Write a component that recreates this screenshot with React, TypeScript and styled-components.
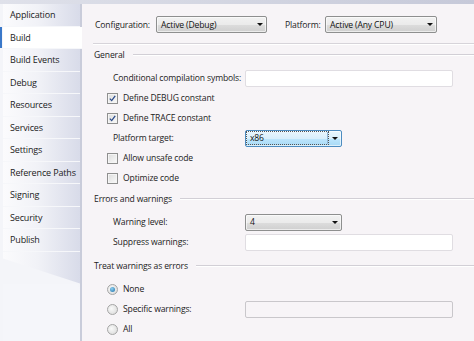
import React from 'react';
import styled, { createGlobalStyle } from 'styled-components';

const GlobalStyle = createGlobalStyle`
  html, body {
    margin: 0;
    padding: 0;
    background: #f7f4f7;
  }
  body {
    font-family: "Open Sans", "Liberation Sans", sans-serif;
    font-size: 8.6px;
    letter-spacing: -0.15px;
    color: #1b1b1b;
    white-space: nowrap;
  }
`;

const Window = styled.div`
  width: 474px;
  height: 341px;
  display: flex;
  flex-direction: column;
  overflow: hidden;
`;

const TopStrip = styled.div`
  height: 4px;
  flex: none;
  background: linear-gradient(to right, #dfe1ea, #c6c9d9);
`;

const Body = styled.div`
  flex: 1;
  display: flex;
  min-height: 0;
`;

const Sidebar = styled.div`
  width: 80px;
  flex: none;
  display: flex;
  flex-direction: column;
  background: #f4f5f9;
  border-right: 2px solid #c9ccda;
`;

const Tab = styled.div<{ $active?: boolean }>`
  height: 22.5px;
  flex: none;
  margin-left: 3px;
  padding-left: 7px;
  display: flex;
  align-items: center;
  box-sizing: border-box;
  border-bottom: 1px solid #f6f7fa;
  font-size: 9px;
  background: ${(p) =>
    p.$active ? '#ffffff' : 'linear-gradient(to right, #fbfbfd, #f1f2f7 45%, #d8dbe9)'};
  margin-right: ${(p) => (p.$active ? '-2px' : '0')};
  position: relative;
  z-index: ${(p) => (p.$active ? 1 : 0)};

  &::before {
    content: '';
    display: ${(p) => (p.$active ? 'block' : 'none')};
    position: absolute;
    left: -3px;
    top: 0;
    bottom: 0;
    width: 2px;
    background: #3a78c9;
  }
`;

const TabFoot = styled.div`
  height: 32px;
  flex: none;
  margin-left: 3px;
  background: linear-gradient(to right, #fbfbfd, #f1f2f7 45%, #d8dbe9);
  clip-path: polygon(0 0, 100% 0, 100% 100%, 0 22%);
`;

const SidebarRest = styled.div`
  flex: 1;
  margin-left: 3px;
  background: #f5f6fa;
  border-top-right-radius: 5px;
`;

const Content = styled.div`
  flex: 1;
  background: #f7f4f7;
  padding: 12px 0 0 12px;
  display: flex;
  flex-direction: column;
`;

const ConfigRow = styled.div`
  display: flex;
  align-items: center;
  height: 17px;
`;

const ConfigLabel = styled.span<{ $w: number; $gap?: number }>`
  width: ${(p) => p.$w}px;
  margin-left: ${(p) => p.$gap ?? 0}px;
  padding-left: 1px;
  flex: none;
`;

const Separator = styled.div`
  margin-top: 10px;
  margin-left: -1px;
  border-top: 1px solid #d7d4da;
  border-bottom: 1px solid #ffffff;
`;

const GroupHeader = styled.div<{ $top: number }>`
  display: flex;
  align-items: center;
  height: 12px;
  margin-top: ${(p) => p.$top}px;
  margin-bottom: 7px;

  &::after {
    content: '';
    flex: 1;
    margin-left: 8px;
    border-top: 1px solid #d2cfd6;
    border-bottom: 1px solid #ffffff;
  }
`;

const Row = styled.div`
  display: flex;
  align-items: center;
  height: 20px;
  padding-left: 19px;
`;

const CheckRow = styled.label`
  display: flex;
  align-items: center;
  height: 20px;
  padding-left: 13px;
  gap: 5px;
`;

const Label = styled.span<{ $w?: number }>`
  width: ${(p) => p.$w ?? 132}px;
  flex: none;
`;

const Select = styled.div<{ $w: number; $focus?: boolean }>`
  width: ${(p) => p.$w}px;
  height: 17px;
  box-sizing: border-box;
  display: flex;
  align-items: center;
  border: 1px solid ${(p) => (p.$focus ? '#4d8cc0' : '#8e8f8f')};
  border-radius: 2px;
  background: ${(p) =>
    p.$focus
      ? 'linear-gradient(#eaf6fd, #d9effc 50%, #bee6fd 51%, #a7d9f5)'
      : 'linear-gradient(#f2f2f2, #ebebeb 50%, #dddddd 51%, #cfcfcf)'};
  box-shadow: inset 0 0 0 1px rgba(255, 255, 255, 0.6);
  color: #111;
`;

const SelectText = styled.span<{ $focus?: boolean }>`
  flex: 1;
  padding-left: 3px;
  margin: 1px 0 1px 1px;
  line-height: 12px;
  outline: ${(p) => (p.$focus ? '1px dotted #555' : 'none')};
  border-right: ${(p) => (p.$focus ? '1px solid #8fb7d8' : 'none')};
`;

const Arrow = styled.span`
  width: 13px;
  display: flex;
  justify-content: center;

  &::after {
    content: '';
    border-left: 3px solid transparent;
    border-right: 3px solid transparent;
    border-top: 3px solid #111;
  }
`;

const TextInput = styled.div<{ $disabled?: boolean }>`
  width: 208px;
  height: 17px;
  box-sizing: border-box;
  border: 1px solid ${(p) => (p.$disabled ? '#c9c7cb' : '#e0dde2')};
  border-radius: 2px;
  background: ${(p) => (p.$disabled ? '#f7f4f7' : '#ffffff')};
`;

const Box = styled.span`
  width: 11px;
  height: 11px;
  box-sizing: border-box;
  border: 1px solid #8f8f8f;
  background: linear-gradient(135deg, #dcdcdc, #fafafa);
  box-shadow: inset 0 0 0 1px #f4f4f4;
  display: flex;
  align-items: center;
  justify-content: center;
  flex: none;
`;

const Radio = styled.span<{ $checked?: boolean }>`
  width: 11px;
  height: 11px;
  box-sizing: border-box;
  border-radius: 50%;
  border: 1px solid #a5a5a5;
  background: radial-gradient(circle at 40% 40%, #fafafa, #d6d6d6);
  display: flex;
  align-items: center;
  justify-content: center;
  flex: none;

  &::after {
    content: '';
    display: ${(p) => (p.$checked ? 'block' : 'none')};
    width: 5px;
    height: 5px;
    border-radius: 50%;
    background: radial-gradient(circle at 40% 35%, #8fd0f2, #1c6ea6);
  }
`;

const Check = () => (
  <svg width="7" height="7" viewBox="0 0 7 7">
    <path d="M0.8 3.6 L2.7 5.6 L6.2 0.8" fill="none" stroke="#2b4a8a" strokeWidth="1.3" />
  </svg>
);

const tabs = [
  'Application',
  'Build',
  'Build Events',
  'Debug',
  'Resources',
  'Services',
  'Settings',
  'Reference Paths',
  'Signing',
  'Security',
  'Publish',
];

const App: React.FC = () => {
  return (
    <>
      <GlobalStyle />
      <Window>
        <TopStrip />
        <Body>
          <Sidebar>
            {tabs.map((t) => (
              <Tab key={t} $active={t === 'Build'}>
                {t}
              </Tab>
            ))}
            <TabFoot />
            <SidebarRest />
          </Sidebar>

          <Content>
            <ConfigRow>
              <ConfigLabel $w={61}>Configuration:</ConfigLabel>
              <Select $w={111}>
                <SelectText>Active (Debug)</SelectText>
                <Arrow />
              </Select>
              <ConfigLabel $w={40} $gap={17}>
                Platform:
              </ConfigLabel>
              <Select $w={112}>
                <SelectText>Active (Any CPU)</SelectText>
                <Arrow />
              </Select>
            </ConfigRow>
            <Separator />

            <GroupHeader $top={4}>General</GroupHeader>
            <Row>
              <Label>Conditional compilation symbols:</Label>
              <TextInput />
            </Row>
            <CheckRow>
              <Box>
                <Check />
              </Box>
              Define DEBUG constant
            </CheckRow>
            <CheckRow>
              <Box>
                <Check />
              </Box>
              Define TRACE constant
            </CheckRow>
            <Row>
              <Label>Platform target:</Label>
              <Select $w={97} $focus>
                <SelectText $focus>x86</SelectText>
                <Arrow />
              </Select>
            </Row>
            <CheckRow>
              <Box />
              Allow unsafe code
            </CheckRow>
            <CheckRow>
              <Box />
              Optimize code
            </CheckRow>

            <GroupHeader $top={5}>Errors and warnings</GroupHeader>
            <Row>
              <Label>Warning level:</Label>
              <Select $w={97}>
                <SelectText>4</SelectText>
                <Arrow />
              </Select>
            </Row>
            <Row>
              <Label>Suppress warnings:</Label>
              <TextInput />
            </Row>

            <GroupHeader $top={8}>Treat warnings as errors</GroupHeader>
            <CheckRow>
              <Radio $checked />
              None
            </CheckRow>
            <CheckRow>
              <Radio />
              <Label $w={117}>Specific warnings:</Label>
              <TextInput $disabled />
            </CheckRow>
            <CheckRow>
              <Radio />
              All
            </CheckRow>
          </Content>
        </Body>
      </Window>
    </>
  );
};

export default App;
